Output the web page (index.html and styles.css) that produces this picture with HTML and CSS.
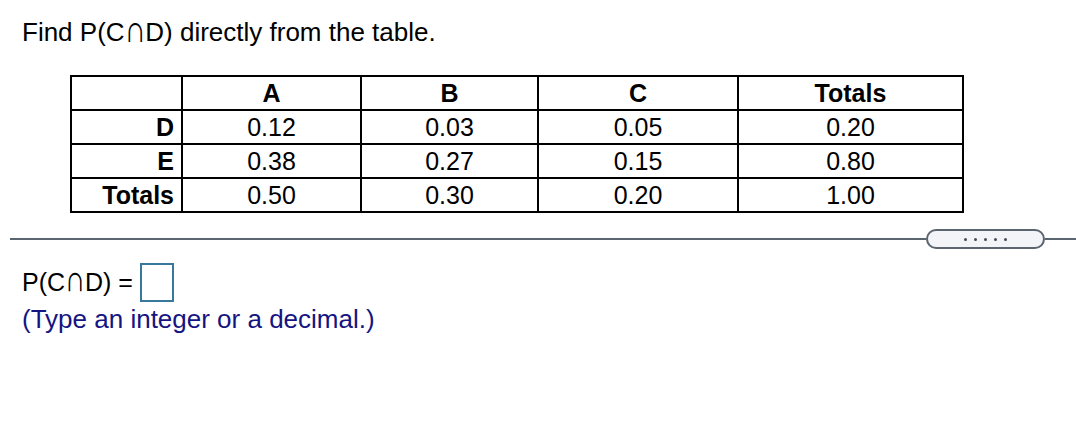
FILE: index.html
```html
<!DOCTYPE html>
<html>
<head>
<meta charset="utf-8">
<link rel="stylesheet" href="styles.css">
</head>
<body>
<div class="page">
  <p class="prompt">Find P(C<span class="cap">∩</span>D) directly from the table.</p>
  <table class="data">
    <colgroup>
      <col class="c0"><col class="c1"><col class="c2"><col class="c3"><col class="c4">
    </colgroup>
    <tr><th class="rh"></th><th>A</th><th>B</th><th>C</th><th>Totals</th></tr>
    <tr><th class="rh">D</th><td>0.12</td><td>0.03</td><td>0.05</td><td>0.20</td></tr>
    <tr><th class="rh">E</th><td>0.38</td><td>0.27</td><td>0.15</td><td>0.80</td></tr>
    <tr><th class="rh">Totals</th><td>0.50</td><td>0.30</td><td>0.20</td><td>1.00</td></tr>
  </table>
  <div class="divider">
    <span class="line"></span>
    <span class="pill"><i></i><i></i><i></i><i></i><i></i></span>
    <span class="line tail"></span>
  </div>
  <div class="answer">
    <div class="eq"><span>P(C<span class="cap">∩</span>D) =</span><span class="box"></span></div>
    <div class="hint">(Type an integer or a decimal.)</div>
  </div>
</div>
</body>
</html>
```
FILE: styles.css
```css
html, body {
  margin: 0;
  padding: 0;
  background: #fff;
}
.page {
  font-family: "Liberation Sans", Arial, sans-serif;
  color: #000;
  padding-top: 16px;
}
.cap {
  display: inline-block;
  line-height: 1;
  margin: 0 1px;
  transform: scale(1.15, 1.45);
  transform-origin: 50% 80%;
}
.prompt {
  margin: 0 0 0 22px;
  font-size: 26px;
  line-height: 32px;
  height: 32px;
}
.data {
  margin: 27px 0 0 70px;
  border-collapse: collapse;
  border: 2px solid #000;
  font-size: 25px;
  table-layout: fixed;
  width: 892px;
}
.c0 { width: 111px; }
.c1 { width: 179px; }
.c2 { width: 177px; }
.c3 { width: 200px; }
.c4 { width: 225px; }
.data th, .data td {
  border: 2px solid #000;
  height: 32px;
  padding: 0;
  text-align: center;
  line-height: 30px;
}
.data th { font-weight: bold; }
.data th.rh {
  text-align: right;
  padding-right: 7px;
}
.divider {
  display: flex;
  align-items: center;
  margin: 16px 0 0 10px;
}
.line {
  flex: 1;
  height: 2px;
  background: #5b6570;
}
.line.tail {
  flex: 0 0 31px;
}
.pill {
  width: 115px;
  height: 16px;
  border: 2px solid #5b6570;
  border-radius: 10px;
  background: #f3f4f7;
  display: flex;
  align-items: center;
  justify-content: center;
  gap: 7px;
}
.pill i {
  width: 3px;
  height: 3px;
  border-radius: 50%;
  background: #444b55;
}
.answer {
  margin: 13px 0 0 22px;
}
.eq {
  display: flex;
  align-items: center;
  gap: 7px;
  font-size: 25px;
  height: 40px;
}
.box {
  width: 30px;
  height: 35px;
  border: 2px solid #38789a;
}
.hint {
  margin-top: 2px;
  font-size: 26px;
  line-height: 30px;
  color: #141482;
}
```
